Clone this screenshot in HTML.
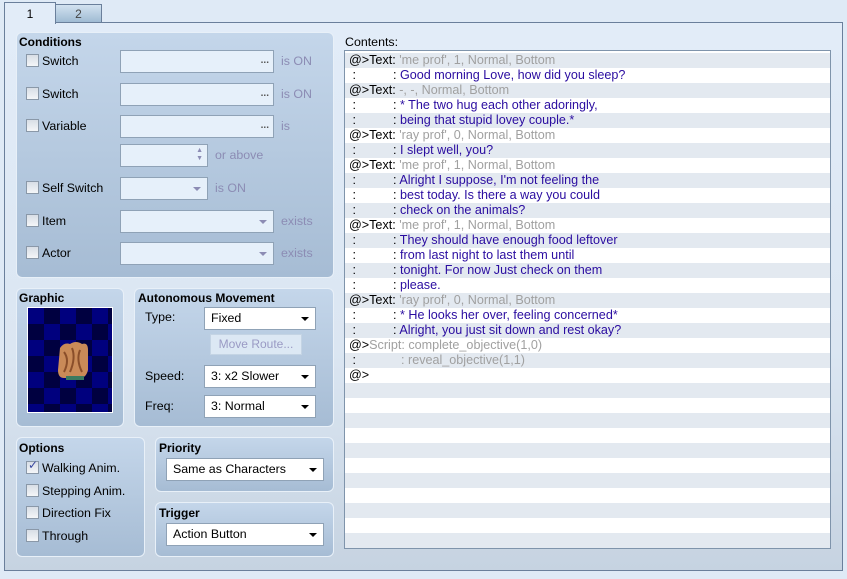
<!DOCTYPE html>
<html><head><meta charset="utf-8"><style>
*{box-sizing:border-box;margin:0;padding:0}
body{width:847px;height:579px;overflow:hidden;background:#dfeaf6;font-family:"Liberation Sans",Tahoma,sans-serif;font-size:12px;color:#000;position:relative}
.a{position:absolute}
.panel{left:4px;top:22px;width:839px;height:549px;border:1px solid #6a7f9b;background:linear-gradient(#e2ecf8,#dbe6f2 60%,#c6d3e1);}
.grp{position:absolute;border:1px solid #e8f0f8;border-radius:6px;background:linear-gradient(#c4d6ea,#a6bcd4);}
.gt{position:absolute;font-weight:bold;font-size:12px}
.cb{position:absolute;width:13px;height:13px;border:1px solid #8a98a8;background:linear-gradient(#d8dee6,#f4f6f8)}
.lbl{position:absolute;font-size:12.4px}
.fld{position:absolute;height:23px;border:1px solid #8fa2b6;background:#e6f0fa}
.dis{position:absolute;color:#8c8cb4;font-size:12.4px}
.sel{position:absolute;height:23px;border:1px solid #8fa2b6;background:#fff;padding:3px 6px;font-size:12.4px}
.arr{position:absolute;right:6px;top:9px;width:0;height:0;border-left:4px solid transparent;border-right:4px solid transparent;border-top:4px solid #000}
.arrd{border-top-color:#8c8cb4}
.dots{position:absolute;right:4px;top:4px;color:#555;font-size:10px;font-weight:bold}
.list{left:344px;top:50px;width:487px;height:499px;border:1px solid #7f94ab;background:#fff;overflow:hidden}
.row{height:15px;line-height:15px;padding-left:4px;white-space:nowrap;font-size:12.6px;position:relative}
.row:nth-child(even){background:#e3e9f0}
.g{color:#a0a0a0}.b{color:#2a0ca0}
.c1{position:absolute;left:48px}
</style></head><body>
<div class="a" style="left:55px;top:4px;width:47px;height:19px;border:1px solid #6a7f9b;background:linear-gradient(#d2e2f0,#9fbbd3);text-align:center;line-height:18px;color:#444">2</div>
<div class="a panel"></div>
<div class="a" style="left:4px;top:2px;width:52px;height:22px;border:1px solid #6a7f9b;border-bottom:none;background:#e2ecf8;text-align:center;line-height:22px">1</div>

<div class="grp" style="left:16px;top:32px;width:318px;height:246px"></div>
<div class="gt" style="left:19px;top:35px">Conditions</div>
<div class="cb" style="left:26px;top:54px"></div><div class="lbl" style="left:42px;top:54px">Switch</div>
<div class="fld" style="left:120px;top:50px;width:154px"><span class="dots">...</span></div><div class="dis" style="left:281px;top:54px">is ON</div>
<div class="cb" style="left:26px;top:87px"></div><div class="lbl" style="left:42px;top:87px">Switch</div>
<div class="fld" style="left:120px;top:83px;width:154px"><span class="dots">...</span></div><div class="dis" style="left:281px;top:87px">is ON</div>
<div class="cb" style="left:26px;top:119px"></div><div class="lbl" style="left:42px;top:119px">Variable</div>
<div class="fld" style="left:120px;top:115px;width:154px"><span class="dots">...</span></div><div class="dis" style="left:281px;top:119px">is</div>
<div class="fld" style="left:120px;top:144px;width:88px"><span style="position:absolute;right:4px;top:2px;font-size:7px;color:#8c8cb4;line-height:8px">▲<br>▼</span></div><div class="dis" style="left:215px;top:148px">or above</div>
<div class="cb" style="left:26px;top:181px"></div><div class="lbl" style="left:42px;top:181px">Self Switch</div>
<div class="fld" style="left:120px;top:177px;width:88px"><span class="arr arrd"></span></div><div class="dis" style="left:215px;top:181px">is ON</div>
<div class="cb" style="left:26px;top:214px"></div><div class="lbl" style="left:42px;top:214px">Item</div>
<div class="fld" style="left:120px;top:210px;width:154px"><span class="arr arrd"></span></div><div class="dis" style="left:281px;top:214px">exists</div>
<div class="cb" style="left:26px;top:246px"></div><div class="lbl" style="left:42px;top:246px">Actor</div>
<div class="fld" style="left:120px;top:242px;width:154px"><span class="arr arrd"></span></div><div class="dis" style="left:281px;top:246px">exists</div>

<div class="grp" style="left:16px;top:288px;width:108px;height:139px"></div>
<div class="gt" style="left:19px;top:291px">Graphic</div>
<div class="a" style="left:27px;top:307px;width:86px;height:106px;border:1px solid #fff;overflow:hidden">
<svg width="84" height="104" style="display:block"><defs><pattern id="p" width="32" height="32" patternUnits="userSpaceOnUse"><rect width="32" height="32" fill="#000040"/><rect width="16" height="16" fill="#00007e"/><rect x="16" y="16" width="16" height="16" fill="#00007e"/></pattern></defs><rect width="84" height="104" fill="url(#p)"/>
<path d="M32 40 q4-6 10-4 q6-4 12 0 q6 -2 6 6 v20 q-2 8-8 8 h-16 q-6 0-6-8z" fill="#c98a58"/>
<path d="M36 44 q6 8 0 20 M44 40 q4 10-2 24 M52 42 q-4 10 2 22" stroke="#8a4e2a" stroke-width="2" fill="none"/>
<rect x="38" y="68" width="18" height="4" fill="#3a7a60"/></svg></div>

<div class="grp" style="left:134px;top:288px;width:200px;height:139px"></div>
<div class="gt" style="left:138px;top:291px">Autonomous Movement</div>
<div class="lbl" style="left:145px;top:310px">Type:</div>
<div class="sel" style="left:204px;top:307px;width:112px">Fixed<span class="arr"></span></div>
<div class="a" style="left:210px;top:334px;width:92px;height:21px;border:1px solid #c4d4e4;background:#dce8f4;color:#9a9ac4;text-align:center;line-height:19px">Move Route...</div>
<div class="lbl" style="left:145px;top:369px">Speed:</div>
<div class="sel" style="left:204px;top:365px;width:112px">3: x2 Slower<span class="arr"></span></div>
<div class="lbl" style="left:145px;top:399px">Freq:</div>
<div class="sel" style="left:204px;top:395px;width:112px">3: Normal<span class="arr"></span></div>

<div class="grp" style="left:16px;top:437px;width:129px;height:120px"></div>
<div class="gt" style="left:19px;top:441px">Options</div>
<div class="cb" style="left:26px;top:461px"></div><div class="a" style="left:28px;top:458px;color:#3848a0;font-size:12px">✓</div><div class="lbl" style="left:42px;top:461px">Walking Anim.</div>
<div class="cb" style="left:26px;top:484px"></div><div class="lbl" style="left:42px;top:484px">Stepping Anim.</div>
<div class="cb" style="left:26px;top:506px"></div><div class="lbl" style="left:42px;top:506px">Direction Fix</div>
<div class="cb" style="left:26px;top:529px"></div><div class="lbl" style="left:42px;top:529px">Through</div>

<div class="grp" style="left:155px;top:437px;width:179px;height:55px"></div>
<div class="gt" style="left:159px;top:441px">Priority</div>
<div class="sel" style="left:166px;top:458px;width:158px">Same as Characters<span class="arr"></span></div>
<div class="grp" style="left:155px;top:502px;width:179px;height:55px"></div>
<div class="gt" style="left:159px;top:506px">Trigger</div>
<div class="sel" style="left:166px;top:523px;width:158px">Action Button<span class="arr"></span></div>

<div class="lbl" style="left:345px;top:35px">Contents:</div>
<div class="a list">
<div style="height:2px"></div>
<div class="row">@&gt;Text: <span class="g">'me prof', 1, Normal, Bottom</span></div>
<div class="row">&nbsp;:<span class="c1">: <span class="b">Good morning Love, how did you sleep?</span></span></div>
<div class="row">@&gt;Text: <span class="g">-, -, Normal, Bottom</span></div>
<div class="row">&nbsp;:<span class="c1">: <span class="b">* The two hug each other adoringly,</span></span></div>
<div class="row">&nbsp;:<span class="c1">: <span class="b">being that stupid lovey couple.*</span></span></div>
<div class="row">@&gt;Text: <span class="g">'ray prof', 0, Normal, Bottom</span></div>
<div class="row">&nbsp;:<span class="c1">: <span class="b">I slept well, you?</span></span></div>
<div class="row">@&gt;Text: <span class="g">'me prof', 1, Normal, Bottom</span></div>
<div class="row">&nbsp;:<span class="c1">: <span class="b">Alright I suppose, I'm not feeling the</span></span></div>
<div class="row">&nbsp;:<span class="c1">: <span class="b">best today. Is there a way you could</span></span></div>
<div class="row">&nbsp;:<span class="c1">: <span class="b">check on the animals?</span></span></div>
<div class="row">@&gt;Text: <span class="g">'me prof', 1, Normal, Bottom</span></div>
<div class="row">&nbsp;:<span class="c1">: <span class="b">They should have enough food leftover</span></span></div>
<div class="row">&nbsp;:<span class="c1">: <span class="b">from last night to last them until</span></span></div>
<div class="row">&nbsp;:<span class="c1">: <span class="b">tonight. For now Just check on them</span></span></div>
<div class="row">&nbsp;:<span class="c1">: <span class="b">please.</span></span></div>
<div class="row">@&gt;Text: <span class="g">'ray prof', 0, Normal, Bottom</span></div>
<div class="row">&nbsp;:<span class="c1">: <span class="b">* He looks her over, feeling concerned*</span></span></div>
<div class="row">&nbsp;:<span class="c1">: <span class="b">Alright, you just sit down and rest okay?</span></span></div>
<div class="row">@&gt;<span class="g">Script: complete_objective(1,0)</span></div>
<div class="row">&nbsp;:<span class="c1 g" style="left:56px">: reveal_objective(1,1)</span></div>
<div class="row">@&gt;</div>
<div class="row"></div><div class="row"></div><div class="row"></div><div class="row"></div><div class="row"></div><div class="row"></div><div class="row"></div><div class="row"></div><div class="row"></div><div class="row"></div><div class="row"></div><div class="row"></div><div class="row"></div>
</div>
</body></html>
